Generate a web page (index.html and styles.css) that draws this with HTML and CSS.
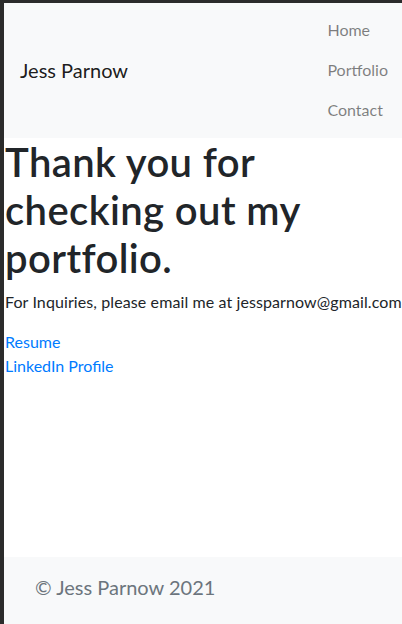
FILE: index.html
```html
<!DOCTYPE html>
<html lang="en">
<head>
<meta charset="utf-8">
<title>Contact - Jess Parnow</title>
<link rel="stylesheet" href="styles.css">
</head>
<body>
<div class="page">
  <nav class="navbar">
    <a class="brand" href="#">Jess Parnow</a>
    <ul class="nav">
      <li><a class="nav-link" href="#">Home</a></li>
      <li><a class="nav-link" href="#">Portfolio</a></li>
      <li><a class="nav-link" href="#">Contact</a></li>
    </ul>
  </nav>
  <main class="main">
    <h1 class="title">Thank you for checking out my portfolio.</h1>
    <p class="lead">For Inquiries, please email me at jessparnow@gmail.com</p>
    <div class="links">
      <a class="link" href="#">Resume</a>
      <a class="link" href="#">LinkedIn Profile</a>
    </div>
  </main>
  <footer class="footer">&copy; Jess Parnow 2021</footer>
</div>
</body>
</html>
```
FILE: styles.css
```css
html, body {
  margin: 0;
  padding: 0;
  height: 100%;
}
body {
  background: #2b2b2b;
  font-family: Lato, "Noto Sans", sans-serif;
  color: #212529;
  font-size: 16px;
  line-height: 1.5;
}
.page {
  box-sizing: border-box;
  margin-left: 4px;
  border-top: 3px solid #2b2b2b;
  height: 100%;
  display: flex;
  flex-direction: column;
  background: #fff;
}
.navbar {
  background: #f8f9fa;
  display: flex;
  align-items: center;
  padding: 7px 14px 8px 16px;
}
.brand {
  color: rgba(0, 0, 0, 0.9);
  text-decoration: none;
  font-size: 20px;
  line-height: 30px;
}
.nav {
  list-style: none;
  margin: 0 0 0 auto;
  padding: 0;
  display: flex;
  flex-direction: column;
}
.nav-link {
  display: block;
  padding: 8px 0;
  color: rgba(0, 0, 0, 0.5);
  text-decoration: none;
}
.main {
  flex: 1;
  padding: 0 0 0 1px;
}
.title {
  margin: 0 0 8px;
  font-size: 40px;
  font-weight: 600;
  line-height: 1.2;
  letter-spacing: 0.4px;
}
.lead {
  margin: 0 0 16px;
  white-space: nowrap;
  letter-spacing: 0.1px;
}
.links {
  display: flex;
  flex-direction: column;
  align-items: flex-start;
}
.link {
  color: #007bff;
  text-decoration: none;
}
.footer {
  background: #f8f9fa;
  color: #6c757d;
  font-size: 20px;
  line-height: 28px;
  padding: 16px 31px 23px;
}
```
